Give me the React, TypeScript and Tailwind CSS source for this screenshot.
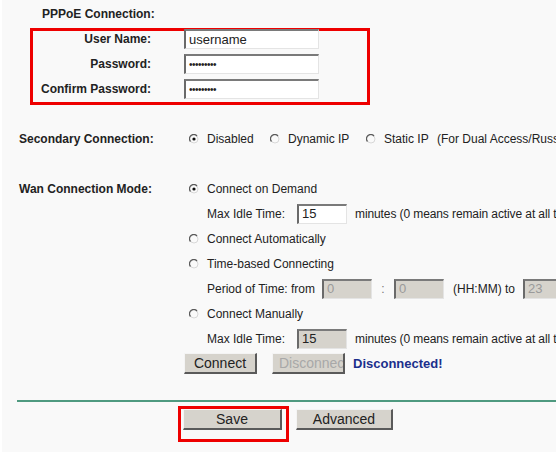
import React from "react";

const font = { fontFamily: '"Liberation Sans", Arial, sans-serif' };

function Radio({ checked = false }: { checked?: boolean }) {
  return (
    <svg width="10" height="10" viewBox="0 0 10 10" className="shrink-0">
      <circle cx="5" cy="5" r="4" fill="#fafafa" stroke="#d8d8d8" strokeWidth="1" />
      <path d="M8 2 A4 4 0 0 0 1.5 7.5" fill="none" stroke="#5a5a5a" strokeWidth="1.3" />
      {checked && <circle cx="5" cy="5" r="1.6" fill="#111" />}
    </svg>
  );
}

function TextBox({
  value,
  width,
  disabled = false,
  small = false,
  dimText = true,
}: {
  value: string;
  width: string;
  disabled?: boolean;
  small?: boolean;
  dimText?: boolean;
}) {
  return (
    <div
      className={`${width} shrink-0 h-[20px] flex items-center pl-[3px] border-t-2 border-l-2 border-t-[#7a7a7a] border-l-[#6a6a6a] border-b border-r border-b-[#e4e4e4] border-r-[#e4e4e4] overflow-hidden ${
        disabled ? "bg-[#d6d3cc]" : "bg-white"
      } ${disabled && dimText ? "text-[#9a9a9a]" : "text-[#222]"} ${
        small ? "text-[10px] tracking-[-0.5px]" : "text-[13px]"
      }`}
    >
      {value}
    </div>
  );
}

function Button({
  label,
  width,
  disabled = false,
}: {
  label: string;
  width: string;
  disabled?: boolean;
}) {
  return (
    <div
      className={`${width} shrink-0 h-[21px] flex items-center overflow-hidden whitespace-nowrap bg-[#d6d3cc] border-t border-l border-t-[#f4f4f4] border-l-[#f4f4f4] border-b-2 border-r-2 border-b-[#5a5a5a] border-r-[#5a5a5a] text-[14px] ${
        disabled ? "text-[#a8a8a8] justify-start pl-[6px]" : "text-[#222] justify-center"
      }`}
    >
      {label}
    </div>
  );
}

function OptionRow({ label, checked = false }: { label: string; checked?: boolean }) {
  return (
    <div className="h-[25px] flex items-center pl-[187px] whitespace-nowrap">
      <Radio checked={checked} />
      <span className="ml-[8px] shrink-0">{label}</span>
    </div>
  );
}

function IdleRow({ disabled = false }: { disabled?: boolean }) {
  return (
    <div className="h-[25px] flex items-center pl-[205px] whitespace-nowrap">
      <span className="w-[90px] shrink-0">Max Idle Time:</span>
      <TextBox value="15" width="w-[50px]" disabled={disabled} dimText={false} />
      <span className="ml-[8px] shrink-0 tracking-[-0.1px]">minutes (0 means remain active at all times.)</span>
    </div>
  );
}

export default function App() {
  return (
    <div className="w-[556px] h-[466px] bg-white overflow-hidden text-[12px] text-[#222]" style={font}>
      <div className="ml-[2px] w-[554px] h-[452px] bg-[#f9f9f9] flex flex-col overflow-hidden">
        {/* PPPoE account */}
        <div className="h-[28px] flex items-center pl-[40px] font-bold">PPPoE Connection:</div>

        <div className="ml-[28px] w-[340px] h-[77px] border-[3px] border-[#ee0000]">
          <div className="flex flex-col gap-[5px] -mt-[2px]">
            {[
              { label: "User Name:", value: "username", small: false },
              { label: "Password:", value: "•••••••••", small: true },
              { label: "Confirm Password:", value: "•••••••••", small: true },
            ].map((row) => (
              <div key={row.label} className="flex items-center h-[20px]">
                <span className="w-[118px] shrink-0 text-right font-bold">{row.label}</span>
                <div className="ml-[33px]">
                  <TextBox value={row.value} width="w-[135px]" small={row.small} />
                </div>
              </div>
            ))}
          </div>
        </div>

        {/* Secondary connection */}
        <div className="mt-[21px] h-[25px] flex items-center whitespace-nowrap">
          <span className="w-[187px] shrink-0 pl-[17px] font-bold">Secondary Connection:</span>
          <Radio checked />
          <span className="ml-[8px] w-[63px] shrink-0">Disabled</span>
          <Radio />
          <span className="ml-[8px] w-[78px] shrink-0">Dynamic IP</span>
          <Radio />
          <span className="ml-[8px] w-[53px] shrink-0">Static IP</span>
          <span className="shrink-0">(For Dual Access/Russia PPPoE)</span>
        </div>

        {/* WAN connection mode */}
        <div className="mt-[25px] h-[25px] flex items-center whitespace-nowrap">
          <span className="w-[187px] shrink-0 pl-[17px] font-bold">Wan Connection Mode:</span>
          <Radio checked />
          <span className="ml-[8px] shrink-0">Connect on Demand</span>
        </div>
        <IdleRow />
        <OptionRow label="Connect Automatically" />
        <OptionRow label="Time-based Connecting" />
        <div className="h-[25px] flex items-center pl-[205px] whitespace-nowrap">
          <span className="w-[115px] shrink-0">Period of Time: from</span>
          <TextBox value="0" width="w-[50px]" disabled />
          <span className="w-[22px] shrink-0 text-center text-[#777]">:</span>
          <TextBox value="0" width="w-[50px]" disabled />
          <span className="ml-[9px] w-[70px] shrink-0">(HH:MM) to</span>
          <TextBox value="23" width="w-[50px]" disabled />
        </div>
        <OptionRow label="Connect Manually" />
        <IdleRow disabled />
        <div className="h-[25px] flex items-center pl-[182px] whitespace-nowrap">
          <Button label="Connect" width="w-[73px]" />
          <div className="ml-[15px] shrink-0">
            <Button label="Disconnect" width="w-[73px]" disabled />
          </div>
          <span className="ml-[8px] shrink-0 font-bold text-[13px] text-[#1b2f8c]">Disconnected!</span>
        </div>

        <div className="mt-[24px] ml-[15px] h-[2px] bg-[#4f9a80]" />

        {/* Actions */}
        <div className="mt-[4px] flex items-start">
          <div className="ml-[176px] w-[111px] h-[36px] border-[3px] border-[#ee0000] pl-[2px]">
            <Button label="Save" width="w-[99px]" />
          </div>
          <div className="ml-[7px] mt-[3px]">
            <Button label="Advanced" width="w-[97px]" />
          </div>
        </div>
      </div>
    </div>
  );
}
